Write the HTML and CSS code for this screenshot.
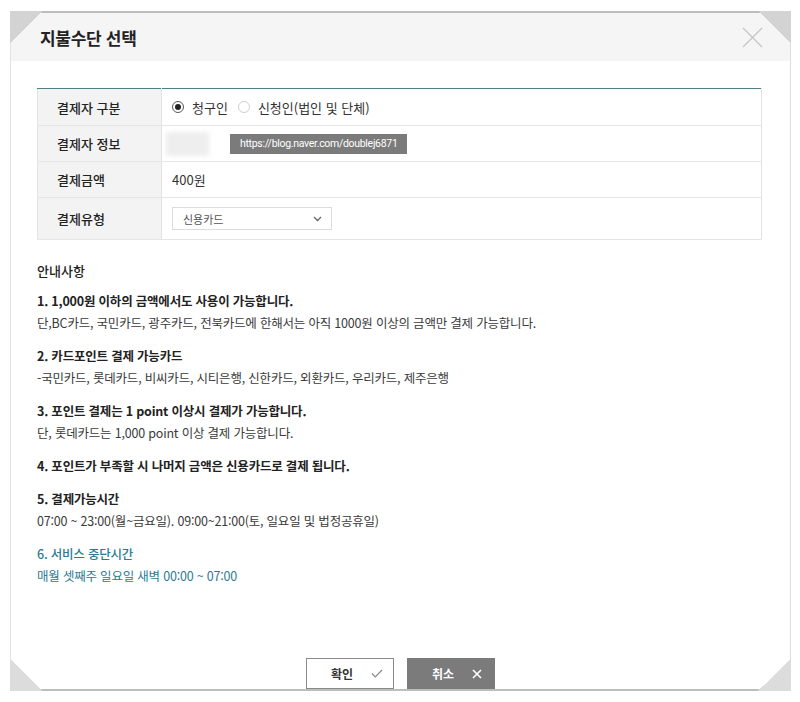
FILE: index.html
```html
<!DOCTYPE html>
<html lang="ko">
<head>
<meta charset="UTF-8" />
<title>지불수단 선택</title>
<link rel="stylesheet" href="styles.css">
</head>
<body>
  <div class="dialog" role="dialog" aria-labelledby="dlgTitle">
    <span class="corner corner-tl"></span>
    <span class="corner corner-tr"></span>
    <span class="corner corner-bl"></span>
    <span class="corner corner-br"></span>

    <div class="dialog-head">
      <h1 id="dlgTitle">지불수단 선택</h1>
      <button class="btn-close" aria-label="닫기">
        <svg width="21" height="21" viewBox="0 0 21 21"><path d="M1 1L20 20M20 1L1 20" stroke="#c4c4c4" stroke-width="1.2" fill="none"/></svg>
      </button>
    </div>

    <div class="dialog-body">
      <table class="pay-table">
        <tr>
          <th>결제자 구분</th>
          <td>
            <div class="radio-group">
              <label class="radio checked"><span class="radio-dot"></span>청구인</label>
              <label class="radio"><span class="radio-dot"></span>신청인(법인 및 단체)</label>
            </div>
          </td>
        </tr>
        <tr>
          <th>결제자 정보</th>
          <td>
            <div class="payer-info">
              <span class="blurred"></span>
              <span class="url-tag">https://blog.naver.com/doublej6871</span>
            </div>
          </td>
        </tr>
        <tr>
          <th>결제금액</th>
          <td>400원</td>
        </tr>
        <tr class="row-type">
          <th>결제유형</th>
          <td>
            <div class="select-box">
              <span>신용카드</span>
              <svg width="9" height="6" viewBox="0 0 9 6"><path d="M1 1L4.5 4.5L8 1" stroke="#666" stroke-width="1.3" fill="none"/></svg>
            </div>
          </td>
        </tr>
      </table>

      <div class="notice">
        <h2>안내사항</h2>
        <div class="notice-item">
          <p class="item-title">1. 1,000원 이하의 금액에서도 사용이 가능합니다.</p>
          <p>단,BC카드, 국민카드, 광주카드, 전북카드에 한해서는 아직 1000원 이상의 금액만 결제 가능합니다.</p>
        </div>
        <div class="notice-item">
          <p class="item-title">2. 카드포인트 결제 가능카드</p>
          <p>-국민카드, 롯데카드, 비씨카드, 시티은행, 신한카드, 외환카드, 우리카드, 제주은행</p>
        </div>
        <div class="notice-item">
          <p class="item-title">3. 포인트 결제는 1 point 이상시 결제가 가능합니다.</p>
          <p>단, 롯데카드는 1,000 point 이상 결제 가능합니다.</p>
        </div>
        <div class="notice-item">
          <p class="item-title">4. 포인트가 부족할 시 나머지 금액은 신용카드로 결제 됩니다.</p>
        </div>
        <div class="notice-item">
          <p class="item-title">5. 결제가능시간</p>
          <p>07:00 ~ 23:00(월~금요일). 09:00~21:00(토, 일요일 및 법정공휴일)</p>
        </div>
        <div class="notice-item notice-point">
          <p class="item-title">6. 서비스 중단시간</p>
          <p>매월 셋째주 일요일 새벽 00:00 ~ 07:00</p>
        </div>
      </div>
    </div>

    <div class="dialog-foot">
      <button class="btn btn-ok">확인
        <svg width="12" height="9" viewBox="0 0 12 9"><path d="M1 4.5L4.3 7.8L11 1" stroke="#888" stroke-width="1.2" fill="none"/></svg>
      </button>
      <button class="btn btn-cancel">취소
        <svg width="10" height="10" viewBox="0 0 10 10"><path d="M1 1L9 9M9 1L1 9" stroke="#fff" stroke-width="1.6" fill="none"/></svg>
      </button>
    </div>
  </div>
</body>
</html>
```

FILE: styles.css
```css
*, *:before, *:after {
  box-sizing: border-box;
}

body {
  margin: 0;
  background: #fff;
  font-family: "Noto Sans CJK KR", "Noto Sans", sans-serif;
  font-size: 13px;
  color: #333;
}

p, h1, h2 {
  margin: 0;
}

/* Dialog frame */
.dialog {
  position: relative;
  width: 781px;
  height: 680px;
  margin: 11px 0 0 10px;
  border-top: 2px solid #bdbdbd;
  border-bottom: 2px solid #bdbdbd;
  border-left: 1px solid #e2e2e2;
  border-right: 1px solid #dedede;
  display: flex;
  flex-direction: column;
}

/* decorative folded corners */
.corner {
  position: absolute;
  width: 33px;
  height: 33px;
  z-index: 2;
}
.corner-tl {
  top: -2px;
  left: -1px;
  background: linear-gradient(135deg, #d3d3d3 50%, transparent 50%);
}
.corner-tr {
  top: -2px;
  right: -1px;
  background: linear-gradient(225deg, #d3d3d3 50%, transparent 50%);
}
.corner-bl {
  bottom: -2px;
  left: -1px;
  background: linear-gradient(45deg, #dcdcdc 50%, transparent 50%);
}
.corner-br {
  bottom: -2px;
  right: -1px;
  background: linear-gradient(315deg, #dcdcdc 50%, transparent 50%);
}

.dialog-head {
  height: 48px;
  background: #f5f5f5;
  display: flex;
  align-items: center;
  justify-content: space-between;
  padding: 0 27px 0 29px;
}

.dialog-head h1 {
  font-size: 17px;
  font-weight: 700;
  color: #222;
  letter-spacing: -0.3px;
}

.btn-close {
  border: none;
  background: none;
  padding: 0;
  width: 21px;
  height: 21px;
  display: flex;
}

.dialog-body {
  padding: 27px 26px 0 26px;
}

/* Pay table */
.pay-table {
  width: 725px;
  border-collapse: collapse;
  border-top: 1px solid #4d8088;
  border-left: 1px solid #e3e3e3;
  border-right: 1px solid #e3e3e3;
}

.pay-table th,
.pay-table td {
  height: 36px;
  border-bottom: 1px solid #e6e6e6;
  font-size: 13px;
  font-weight: 400;
  padding: 0;
}

.pay-table th {
  width: 124px;
  background: #f3f3f3;
  text-align: left;
  padding-left: 19px;
  color: #222;
  font-weight: 500;
  border-right: 1px solid #e3e3e3;
}

.pay-table td {
  padding-left: 10px;
  color: #333;
}

.pay-table tr:first-child th,
.pay-table tr:first-child td {
  height: 37px;
}

.pay-table .row-type th,
.pay-table .row-type td {
  height: 42px;
}

.radio-group {
  display: flex;
  align-items: center;
  gap: 10px;
}

.radio {
  display: flex;
  align-items: center;
  gap: 8px;
}

.radio-dot {
  width: 12px;
  height: 12px;
  border: 1px solid #cfcfcf;
  border-radius: 50%;
  display: flex;
  align-items: center;
  justify-content: center;
}

.radio.checked .radio-dot {
  border-color: #555;
}

.radio.checked .radio-dot:after {
  content: "";
  width: 6px;
  height: 6px;
  border-radius: 50%;
  background: #222;
}

.payer-info {
  display: flex;
  align-items: center;
  gap: 20px;
}

.blurred {
  width: 43px;
  height: 24px;
  margin-left: -6px;
  background: #eee;
  filter: blur(2px);
}

.url-tag {
  background: #7b7b7b;
  color: #fff;
  font-family: Roboto, "Liberation Sans", sans-serif;
  font-size: 10.5px;
  letter-spacing: -0.3px;
  height: 20px;
  line-height: 20px;
  padding: 0 9px 0 10px;
  margin-left: 1px;
}

.select-box {
  width: 160px;
  height: 23px;
  border: 1px solid #dcdcdc;
  display: flex;
  align-items: center;
  justify-content: space-between;
  padding: 0 9px 0 10px;
  font-size: 11px;
  color: #555;
}

/* Notice */
.notice {
  margin-top: 20px;
  line-height: 22px;
  color: #3a3a3a;
}

.notice h2 {
  font-size: 13px;
  font-weight: 500;
  color: #222;
  margin-bottom: 8px;
}

.notice-item {
  margin-bottom: 11px;
}

.notice-item p {
  font-size: 12.5px;
  letter-spacing: -0.2px;
}

.notice-item .item-title {
  font-weight: 700;
  color: #222;
}

.notice-point p,
.notice-point .item-title {
  color: #2d7b91;
}

.notice-point .item-title {
  font-weight: 500;
}

/* Footer buttons */
.dialog-foot {
  margin-top: auto;
  display: flex;
  justify-content: center;
  gap: 13px;
}

.btn {
  width: 88px;
  height: 31px;
  font-family: inherit;
  font-size: 12px;
  font-weight: 700;
  display: flex;
  align-items: center;
  justify-content: space-between;
  padding: 0 10px 0 24px;
  cursor: pointer;
}

.btn-ok {
  background: #fff;
  border: 1px solid #8a8a8a;
  color: #333;
}

.btn-cancel {
  background: #7b7b7b;
  border: 1px solid #7b7b7b;
  color: #fff;
  padding-right: 12px;
}
```
